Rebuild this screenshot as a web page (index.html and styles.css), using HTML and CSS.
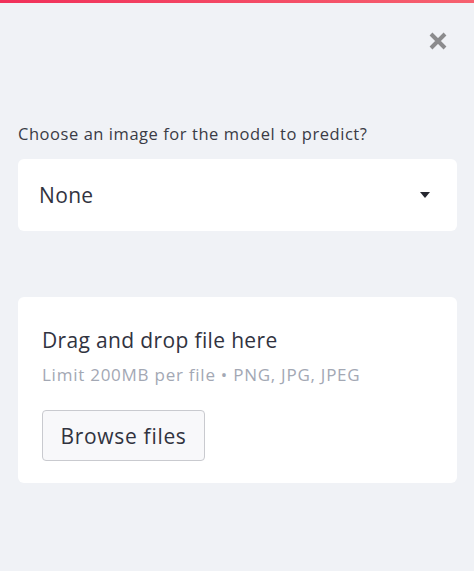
FILE: index.html
```html
<!DOCTYPE html>
<html lang="en">
<head>
<meta charset="utf-8">
<title>Sidebar</title>
<link rel="stylesheet" href="styles.css">
</head>
<body>
<div class="topbar"></div>
<aside class="sidebar">
  <div class="close-row">
    <button class="close-btn" aria-label="Close sidebar">
      <svg width="20" height="20" viewBox="0 0 20 20"><path d="M3 3 L17 17 M17 3 L3 17" stroke="#8b8b8d" stroke-width="4" stroke-linecap="butt"/></svg>
    </button>
  </div>
  <label class="field-label">Choose an image for the model to predict?</label>
  <div class="select">
    <span class="select-value">None</span>
    <span class="caret"></span>
  </div>
  <section class="uploader">
    <div class="drop-title">Drag and drop file here</div>
    <div class="drop-limit">Limit 200MB per file • PNG, JPG, JPEG</div>
    <button class="browse-btn">Browse files</button>
  </section>
</aside>
</body>
</html>
```
FILE: styles.css
```css
html, body {
  margin: 0;
  padding: 0;
}
body {
  width: 474px;
  height: 571px;
  background: #f0f2f6;
  font-family: "Open Sans", "Noto Sans", sans-serif;
  color: #31333f;
  overflow: hidden;
}
.topbar {
  height: 3px;
  background: linear-gradient(90deg, #f1305a, #f6616f);
}
.sidebar {
  padding: 0 17px 0 18px;
}
.close-row {
  display: flex;
  justify-content: flex-end;
  padding-top: 28px;
}
.close-btn {
  border: 0;
  background: transparent;
  padding: 0;
  margin-right: 9px;
  width: 20px;
  height: 20px;
  display: flex;
}
.field-label {
  display: block;
  margin-top: 72px;
  font-size: 16.5px;
  line-height: 22px;
  letter-spacing: 0.55px;
  color: #3a3b45;
}
.select {
  margin-top: 14px;
  height: 72px;
  background: #ffffff;
  border-radius: 6px;
  display: flex;
  align-items: center;
  justify-content: space-between;
  padding: 0 27px 0 21px;
}
.select-value {
  font-size: 21px;
  letter-spacing: 0.35px;
  color: #31333f;
}
.caret {
  width: 0;
  height: 0;
  border-left: 5px solid transparent;
  border-right: 5px solid transparent;
  border-top: 6px solid #262730;
}
.uploader {
  margin-top: 66px;
  height: 186px;
  box-sizing: border-box;
  background: #ffffff;
  border-radius: 6px;
  padding: 29px 24px 0 24px;
  display: flex;
  flex-direction: column;
  align-items: flex-start;
}
.drop-title {
  font-size: 21px;
  line-height: 28px;
  letter-spacing: 0.35px;
  color: #31333f;
}
.drop-limit {
  margin-top: 10px;
  font-size: 17px;
  line-height: 22px;
  letter-spacing: 0.75px;
  color: #a3a8b4;
}
.browse-btn {
  margin-top: 24px;
  width: 163px;
  height: 51px;
  box-sizing: border-box;
  border: 1px solid #c9cacf;
  border-radius: 4px;
  background: #f8f8fa;
  font-family: "Open Sans", "Noto Sans", sans-serif;
  font-size: 21px;
  letter-spacing: 0.7px;
  color: #31333f;
  padding: 0;
}
```
